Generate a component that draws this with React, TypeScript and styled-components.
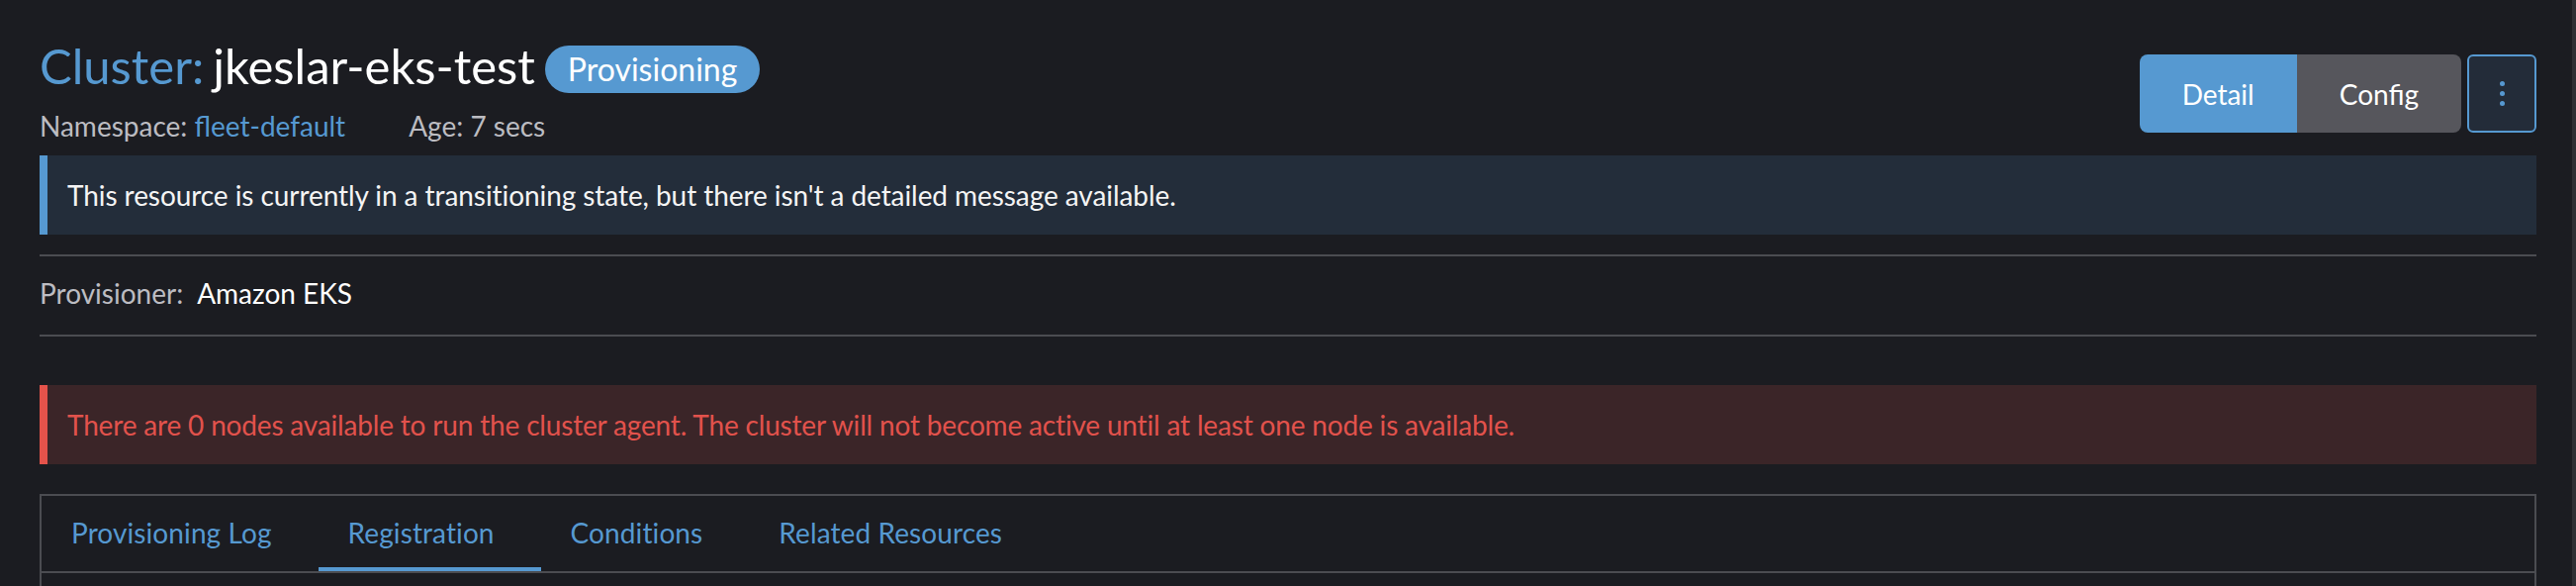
import styled, { createGlobalStyle } from "styled-components";

// ------ Styled ------ //
const GlobalStyle = createGlobalStyle`
  html, body {
    margin: 0;
    background-color: #1b1c21;
  }
  body {
    font-family: Lato, "Open Sans", sans-serif;
    color: #ffffff;
  }
  * {
    box-sizing: border-box;
  }
`;
const Page = styled.div`
  min-height: 100vh;
  padding: 0 36px 0 40px;
  border-right: 4px solid #2e2f34;
`;
const Header = styled.div`
  display: flex;
  justify-content: space-between;
  align-items: flex-start;
  padding-top: 37px;
`;
const Title = styled.h1`
  display: flex;
  align-items: flex-start;
  margin: 0;
  font-size: 49px;
  font-weight: 400;
  line-height: 58px;
  white-space: nowrap;
`;
const TitleLabel = styled.span`
  color: #5699d1;
  margin-right: 9px;
`;
const Badge = styled.span`
  margin: 9px 0 0 10px;
  height: 48px;
  padding: 0 23px;
  border-radius: 24px;
  background-color: #5699d1;
  color: #fff;
  font-size: 32px;
  line-height: 48px;
`;
const Meta = styled.div`
  display: flex;
  gap: 64px;
  margin-top: 12px;
  font-size: 28px;
  line-height: 40px;
  color: #bcbcc2;
`;
const Link = styled.a`
  color: #5699d1;
  text-decoration: none;
`;
const Actions = styled.div`
  display: flex;
  gap: 6px;
  margin-top: 18px;
`;
const ButtonGroup = styled.div`
  display: flex;
  border-radius: 8px;
  overflow: hidden;
`;
const SegButton = styled.button<{ $active?: boolean }>`
  height: 79px;
  padding: 0 43px;
  border: none;
  background-color: ${props => (props.$active ? "#5699d1" : "#56565c")};
  color: #fff;
  font-family: inherit;
  font-size: 28px;
`;
const Kebab = styled.button`
  display: flex;
  flex-direction: column;
  align-items: center;
  justify-content: center;
  gap: 5px;
  width: 70px;
  height: 79px;
  border: 2px solid #5699d1;
  border-radius: 6px;
  background-color: #232c39;
  span {
    width: 5px;
    height: 5px;
    border-radius: 50%;
    background-color: #5699d1;
  }
`;
const Banner = styled.div<{ $kind: "info" | "error" }>`
  display: flex;
  align-items: center;
  height: 80px;
  margin-top: ${props => (props.$kind === "info" ? "10px" : "49px")};
  padding-left: 20px;
  border-left: 8px solid ${props => (props.$kind === "info" ? "#5699d1" : "#e5534b")};
  background-color: ${props => (props.$kind === "info" ? "#232d3a" : "#3b2528")};
  color: ${props => (props.$kind === "info" ? "#f4f4f4" : "#e2524c")};
  font-size: 28px;
  letter-spacing: ${props => (props.$kind === "info" ? "-0.07px" : "-0.17px")};
`;
const Divider = styled.div<{ $top: number }>`
  height: 2px;
  margin-top: ${props => props.$top}px;
  background-color: #4b4c51;
`;
const InfoRow = styled.div`
  display: flex;
  align-items: center;
  gap: 14px;
  height: 79px;
  padding-bottom: 6px;
  font-size: 28px;
  span:first-child {
    color: #bcbcc2;
  }
`;
const TabsBox = styled.div`
  margin-top: 30px;
  border: 2px solid #4b4c51;
  border-bottom: none;
`;
const TabList = styled.ul`
  display: flex;
  margin: 0;
  padding: 0;
  list-style: none;
  border-bottom: 2px solid #4b4c51;
`;
const Tab = styled.li<{ $active?: boolean }>`
  padding: 0 47px 0 30px;
  height: 76px;
  line-height: 74px;
  font-size: 28px;
  letter-spacing: 0.1px;
  color: #5699d1;
  border-bottom: 4px solid ${props => (props.$active ? "#5699d1" : "transparent")};
`;
const TabBody = styled.div`
  height: 240px;
`;

const tabs = ["Provisioning Log", "Registration", "Conditions", "Related Resources"];

function App() {
  return (
    <>
      <GlobalStyle />
      <Page>
        <Header>
          <div>
            <Title>
              <TitleLabel>Cluster:</TitleLabel>
              jkeslar-eks-test
              <Badge>Provisioning</Badge>
            </Title>
            <Meta>
              <span>
                Namespace: <Link href="#">fleet-default</Link>
              </span>
              <span>Age: 7 secs</span>
            </Meta>
          </div>
          <Actions>
            <ButtonGroup>
              <SegButton $active>Detail</SegButton>
              <SegButton>Config</SegButton>
            </ButtonGroup>
            <Kebab aria-label="More actions">
              <span />
              <span />
              <span />
            </Kebab>
          </Actions>
        </Header>

        <Banner $kind="info">
          This resource is currently in a transitioning state, but there isn't a detailed message available.
        </Banner>

        <Divider $top={20} />
        <InfoRow>
          <span>Provisioner:</span>
          <span>Amazon EKS</span>
        </InfoRow>
        <Divider $top={0} />

        <Banner $kind="error">
          There are 0 nodes available to run the cluster agent. The cluster will not become active until at least one node is available.
        </Banner>

        <TabsBox>
          <TabList>
            {tabs.map(tab => (
              <Tab key={tab} $active={tab === "Registration"}>
                {tab}
              </Tab>
            ))}
          </TabList>
          <TabBody />
        </TabsBox>
      </Page>
    </>
  );
}

export default App;
